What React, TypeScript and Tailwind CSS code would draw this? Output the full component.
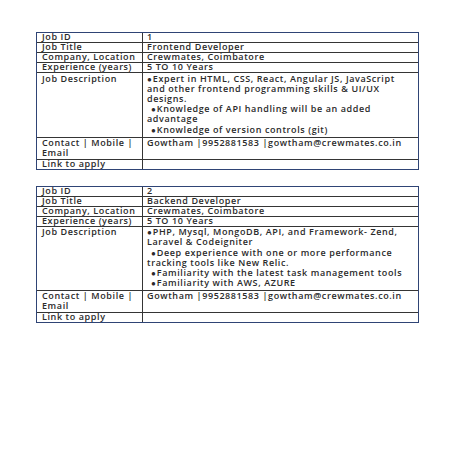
import React from "react";

type Line = { text: string; bullet?: boolean; indent?: boolean };

interface Job {
  id: string;
  title: string;
  location: string;
  experience: string;
  description: Line[];
  contact: string;
}

const JOBS: Job[] = [
  {
    id: "1",
    title: "Frontend Developer",
    location: "Crewmates, Coimbatore",
    experience: "5 TO 10 Years",
    description: [
      { text: "Expert in HTML, CSS, React, Angular JS, JavaScript", bullet: true },
      { text: "and other frontend programming skills & UI/UX" },
      { text: "designs." },
      { text: "Knowledge of API handling will be an added", bullet: true, indent: true },
      { text: "advantage" },
      { text: "Knowledge of version controls (git)", bullet: true, indent: true },
    ],
    contact: "Gowtham |9952881583 |gowtham@crewmates.co.in",
  },
  {
    id: "2",
    title: "Backend Developer",
    location: "Crewmates, Coimbatore",
    experience: "5 TO 10 Years",
    description: [
      { text: "PHP, Mysql, MongoDB, API, and Framework- Zend,", bullet: true },
      { text: "Laravel & Codeigniter" },
      { text: "Deep experience with one or more performance", bullet: true, indent: true },
      { text: "tracking tools like New Relic." },
      { text: "Familiarity with the latest task management tools", bullet: true, indent: true },
      { text: "Familiarity with AWS, AZURE", bullet: true, indent: true },
    ],
    contact: "Gowtham |9952881583 |gowtham@crewmates.co.in",
  },
];

// single-line cell: 9px tall, baseline pulled up so descenders clear the rule
function Cell({ children }: { children: React.ReactNode }) {
  return <div className="whitespace-nowrap pb-[2px] leading-[7px]">{children}</div>;
}

function Row({ label, children, last }: { label: React.ReactNode; children: React.ReactNode; last?: boolean }) {
  return (
    <div className={`flex ${last ? "" : "border-b border-[#353535]"}`}>
      <div className="w-[106px] shrink-0 border-r border-[#353535] pl-[5px]">{label}</div>
      <div className="flex-1 pl-[4px]">{children}</div>
    </div>
  );
}

function DescLine({ line }: { line: Line }) {
  return (
    <div className={`whitespace-nowrap ${line.indent ? "pl-[4px]" : ""}`}>
      {line.bullet && <span className="mr-[1px] text-[8px] tracking-normal">●</span>}
      {line.text}
    </div>
  );
}

function JobTable({ job }: { job: Job }) {
  return (
    <div className="w-[383px] border-[1.5px] border-[#2f4475] text-[9px] font-semibold tracking-[0.6px] text-[#2a2a2a]">
      <Row label={<Cell>Job ID</Cell>}>
        <Cell>{job.id}</Cell>
      </Row>
      <Row label={<Cell>Job Title</Cell>}>
        <Cell>{job.title}</Cell>
      </Row>
      <Row label={<Cell>Company, Location</Cell>}>
        <Cell>{job.location}</Cell>
      </Row>
      <Row label={<Cell>Experience (years)</Cell>}>
        <Cell>{job.experience}</Cell>
      </Row>
      <Row label={<div className="pt-[0.5px] leading-[10.2px]">Job Description</div>}>
        <div className="pt-[0.5px] pb-[2px] leading-[10.2px]">
          {job.description.map((l, i) => (
            <DescLine key={i} line={l} />
          ))}
        </div>
      </Row>
      <Row
        label={
          <div className="pb-[1px] leading-[10px]">
            Contact | Mobile |<br />
            Email
          </div>
        }
      >
        <div className="whitespace-nowrap leading-[10px]">{job.contact}</div>
      </Row>
      <Row label={<Cell>Link to apply</Cell>} last>
        <Cell>&nbsp;</Cell>
      </Row>
    </div>
  );
}

export default function App() {
  return (
    <div
      className="min-h-[451px] w-[451px] bg-white pl-[36px] pt-[32px]"
      style={{ fontFamily: "'Open Sans', 'Noto Sans', sans-serif" }}
    >
      <div className="flex flex-col gap-[16px]">
        {JOBS.map((job) => (
          <JobTable key={job.id} job={job} />
        ))}
      </div>
    </div>
  );
}
